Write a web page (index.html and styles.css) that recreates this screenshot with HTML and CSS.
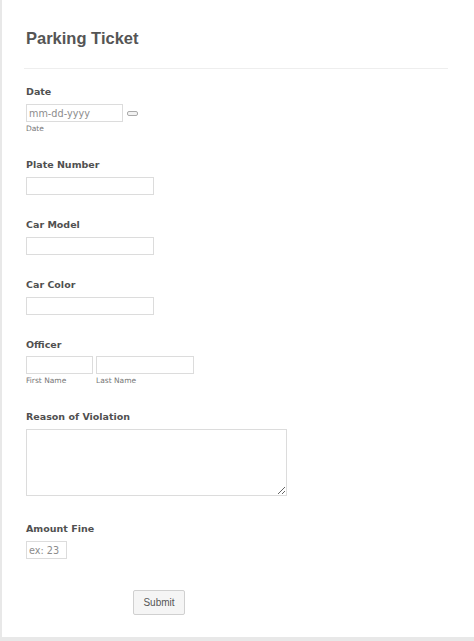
FILE: index.html
```html
<!DOCTYPE html>
<html lang="en">

<head>
    <meta charset="UTF-8">
    <meta name="viewport" content="width=device-width, initial-scale=1.0">
    <title>Parking Ticket</title>
    <link rel="stylesheet" href="styles.css">
</head>

<body>
    <form class="form-page">
        <h1 class="form-title">Parking Ticket</h1>
        <hr class="form-line">

        <!-- date -->
        <div class="field field-date">
            <label class="field-label">Date</label>
            <div class="date-row">
                <input class="text-input input-date" type="text" placeholder="mm-dd-yyyy">
                <span class="date-picker"></span>
            </div>
            <span class="sub-label">Date</span>
        </div>

        <div class="field">
            <label class="field-label">Plate Number</label>
            <input class="text-input input-wide" type="text">
        </div>

        <div class="field">
            <label class="field-label">Car Model</label>
            <input class="text-input input-wide" type="text">
        </div>

        <div class="field">
            <label class="field-label">Car Color</label>
            <input class="text-input input-wide" type="text">
        </div>

        <!-- officer name -->
        <div class="field field-name">
            <label class="field-label">Officer</label>
            <div class="name-row">
                <div class="name-part">
                    <input class="text-input input-first" type="text">
                    <span class="sub-label">First Name</span>
                </div>
                <div class="name-part">
                    <input class="text-input input-last" type="text">
                    <span class="sub-label">Last Name</span>
                </div>
            </div>
        </div>

        <div class="field field-reason">
            <label class="field-label">Reason of Violation</label>
            <textarea class="text-area"></textarea>
        </div>

        <div class="field field-amount">
            <label class="field-label">Amount Fine</label>
            <input class="text-input input-amount" type="text" placeholder="ex: 23">
        </div>

        <div class="button-row">
            <button class="submit-btn" type="button">Submit</button>
        </div>
    </form>
</body>

</html>
```

FILE: styles.css
```css
html {
    background: #fff;
}

body {
    margin: 0;
    font-family: 'DejaVu Sans', Verdana, sans-serif;
    color: #555;
}

.form-page {
    height: 641px;
    box-sizing: border-box;
    margin: 0;
    padding: 28px 26px 0 22px;
    border-left: 2px solid #e8e8e8;
    border-bottom: 4px solid #e8e8e8;
}

.form-title {
    margin: 0;
    padding-left: 2px;
    font-family: 'Liberation Sans', Arial, sans-serif;
    font-size: 16.5px;
    line-height: 20px;
    font-weight: bold;
    color: #555;
}

.form-line {
    margin: 20px 0 16px;
    border: none;
    border-top: 1px solid #eee;
    height: 0;
}

/* fields */
.field {
    padding-left: 2px;
    margin-bottom: 23px;
}

.field-label {
    display: block;
    font-size: 9.5px;
    line-height: 14px;
    font-weight: bold;
    color: #505050;
    margin-bottom: 5px;
}

.text-input {
    display: block;
    box-sizing: border-box;
    height: 18px;
    margin: 0;
    padding: 0 2px;
    border: 1px solid #dcdcdc;
    background: #fff;
    font-family: 'DejaVu Sans', Verdana, sans-serif;
    font-size: 9.7px;
    color: #555;
    outline: none;
}

.text-input::placeholder {
    color: #8c8c8c;
}

.input-wide {
    width: 128px;
}

.sub-label {
    display: block;
    margin-top: 2px;
    font-size: 7.5px;
    line-height: 10px;
    color: #777;
}

.field-date {
    margin-bottom: 24px;
}

.date-row {
    display: flex;
    align-items: center;
}

.input-date {
    width: 97px;
}

.date-picker {
    width: 9px;
    height: 3px;
    margin-left: 4px;
    margin-top: 1px;
    border: 1px solid #aaa;
    border-radius: 2px;
    background: #f2f2f2;
}

.field-name .field-label {
    margin-bottom: 4px;
}

.name-row {
    display: flex;
    gap: 3px;
}

.input-first {
    width: 67px;
}

.input-last {
    width: 98px;
}

.field-name {
    margin-bottom: 24px;
}

.text-area {
    display: block;
    box-sizing: border-box;
    width: 261px;
    height: 67px;
    margin: 0;
    border: 1px solid #dcdcdc;
    resize: both;
    outline: none;
}

.field-reason {
    margin-bottom: 26px;
}

.input-amount {
    width: 41px;
}

.field-amount {
    margin-bottom: 31px;
}

.button-row {
    padding-left: 109px;
}

.submit-btn {
    box-sizing: border-box;
    width: 52px;
    height: 25px;
    padding: 0;
    border: 1px solid #d0d0d0;
    border-radius: 2px;
    background: #f5f5f5;
    font-family: 'Liberation Sans', Arial, sans-serif;
    font-size: 10px;
    color: #555;
}
```
